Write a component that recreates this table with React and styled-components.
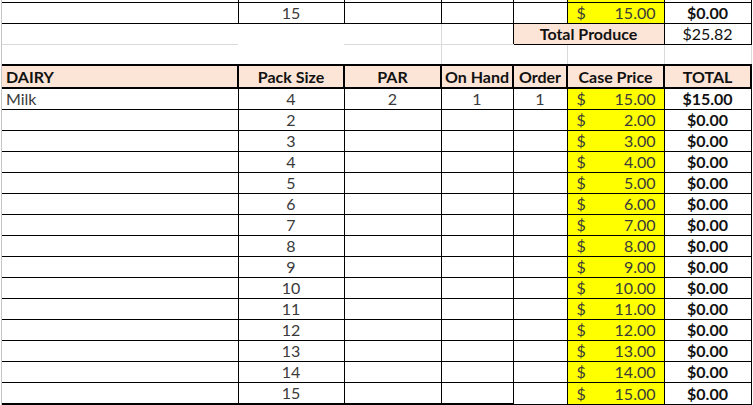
import styled, { createGlobalStyle } from "styled-components";

const GlobalStyle = createGlobalStyle`
  html, body {
    margin: 0;
    padding: 0;
    background: #fff;
  }
`;

const Sheet = styled.div`
  width: 752px;
  height: 405px;
  overflow: hidden;
  margin-left: 1px;
  border-left: 1px solid #c4c4c4;
  box-sizing: border-box;
`;

const Table = styled.table`
  border-collapse: collapse;
  table-layout: fixed;
  width: 749px;
  margin-top: -19px;
  font-family: Lato, "Noto Sans", sans-serif;
  font-size: 16px;
  color: #3a3a3a;
`;

const Row = styled.tr`
  height: ${({ $h }) => $h || 21}px;
`;

const Cell = styled.td`
  padding: 0 4px;
  text-align: ${({ $align }) => $align || "center"};
  font-weight: ${({ $bold }) => ($bold ? 700 : 400)};
  color: ${({ $dark, $bold }) => ($dark || $bold ? "#111" : "#3a3a3a")};
  background: ${({ $fill }) => $fill || "transparent"};
  border-right: ${({ $right }) => $right || "1px solid #000"};
  border-bottom: ${({ $bottom }) => $bottom || "1px solid #000"};
  white-space: nowrap;
  overflow: hidden;
  line-height: 20px;
`;

const PriceCell = styled(Cell)`
  background: #ffff00;
  padding: 0 8px 0 9px;
`;

const Price = styled.div`
  display: flex;
  justify-content: space-between;
`;

const HeadCell = styled.th`
  padding: 0 2px;
  background: #fce4d6;
  color: #111;
  font-weight: 700;
  text-align: ${({ $align }) => $align || "center"};
  border-top: 2px solid #000;
  border-bottom: 2px solid #000;
  border-right: 2px solid #000;
  white-space: nowrap;
  line-height: 20px;
`;

const LeadHead = styled(HeadCell)`
  padding-left: 4px;
`;

const GRID = "1px solid #dadada";
const THICK = "3px solid #000";

function ItemRow({ name, pack, par, onHand, order, price, total, last }) {
  const foot = last ? THICK : undefined;
  return (
    <Row>
      <Cell $align="left" $bottom={foot}>{name}</Cell>
      <Cell $bottom={foot}>{pack}</Cell>
      <Cell $bottom={foot}>{par}</Cell>
      <Cell $bottom={foot}>{onHand}</Cell>
      <Cell>{order}</Cell>
      <PriceCell>
        {price != null && (
          <Price>
            <span>$</span>
            <span>{price.toFixed(2)}</span>
          </Price>
        )}
      </PriceCell>
      <Cell $bold>{total != null && `$${total.toFixed(2)}`}</Cell>
    </Row>
  );
}

const dairy = [
  { name: "Milk", pack: 4, par: 2, onHand: 1, order: 1, price: 15, total: 15 },
  ...Array.from({ length: 14 }, (_, i) => ({
    name: "",
    pack: i + 2,
    price: i + 2,
    total: 0,
  })),
];

export default function App() {
  return (
    <>
      <GlobalStyle />
      <Sheet>
        <Table>
          <colgroup>
            <col style={{ width: 236 }} />
            <col style={{ width: 106 }} />
            <col style={{ width: 97 }} />
            <col style={{ width: 72 }} />
            <col style={{ width: 54 }} />
            <col style={{ width: 97 }} />
            <col style={{ width: 87 }} />
          </colgroup>
          <tbody>
            {/* row above, scrolled mostly out of view */}
            <ItemRow name="" />
            <ItemRow name="" pack={15} price={15} total={0} />

            <Row>
              <Cell $right="none" $bottom={GRID}></Cell>
              <Cell $right="none" $bottom="none"></Cell>
              <Cell $right={GRID} $bottom={GRID}></Cell>
              <Cell $bottom={GRID}></Cell>
              <Cell colSpan={2} $bold $fill="#fce4d6">Total Produce</Cell>
              <Cell $dark>$25.82</Cell>
            </Row>

            <Row>
              <Cell $right="none" $bottom="none"></Cell>
              <Cell $right="none" $bottom="none"></Cell>
              <Cell $right={GRID} $bottom="none"></Cell>
              <Cell $right="none" $bottom="none"></Cell>
              <Cell $right={GRID} $bottom="none"></Cell>
              <Cell $right={GRID} $bottom="none"></Cell>
              <Cell $right={GRID} $bottom="none"></Cell>
            </Row>

            <Row $h={23}>
              <LeadHead $align="left">DAIRY</LeadHead>
              <HeadCell>Pack Size</HeadCell>
              <HeadCell>PAR</HeadCell>
              <HeadCell>On Hand</HeadCell>
              <HeadCell>Order</HeadCell>
              <HeadCell>Case Price</HeadCell>
              <HeadCell>TOTAL</HeadCell>
            </Row>

            {dairy.map((item, i) => (
              <ItemRow key={i} {...item} last={i === dairy.length - 1} />
            ))}
          </tbody>
        </Table>
      </Sheet>
    </>
  );
}
